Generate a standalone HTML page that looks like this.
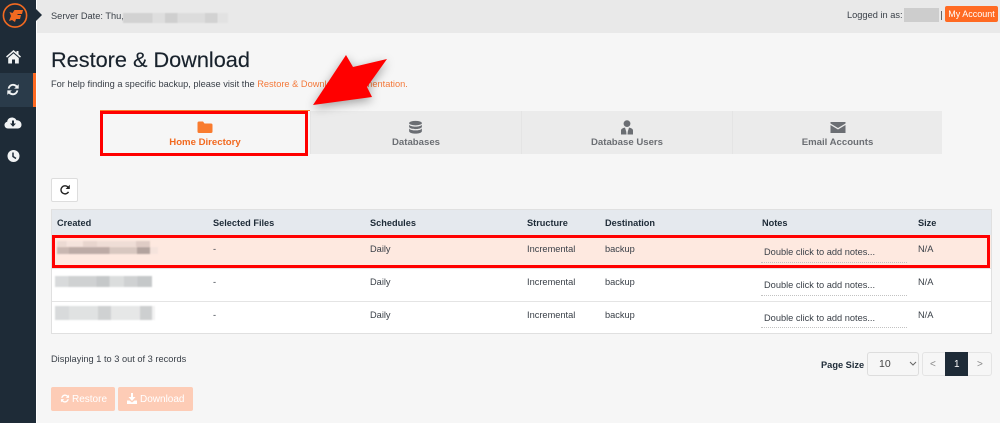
<!DOCTYPE html>
<html><head><meta charset="utf-8"><style>
html,body{margin:0;padding:0}
body{width:1000px;height:423px;overflow:hidden;background:#f6f6f6;position:relative;font-family:"Liberation Sans",sans-serif;font-size:9.25px;color:#3a4048}
.a{position:absolute;white-space:nowrap}
.b{position:absolute}
.tab{position:absolute;top:111px;height:43px;background:#ebebeb;border-left:1px solid #e4e4e4;box-sizing:border-box;text-align:center;font-weight:bold;font-size:9.6px;color:#6b6e73}
.tab span{position:absolute;left:0;right:0;top:25.5px}
.tab svg{position:absolute;left:50%;top:9px;margin-left:-8px}
.th{position:absolute;top:218px;font-weight:bold;color:#1e2b37;font-size:9.2px;white-space:nowrap}
.c{position:absolute;white-space:nowrap;font-size:9.25px;color:#3a4048}
.dot{position:absolute;left:761px;width:146px;border-bottom:1px dotted #c2c2c2}
.bl{position:absolute;filter:blur(.7px)}
</style></head><body>

<div class="b" style="left:37px;top:0;width:963px;height:33px;background:#e9e9e9"></div>
<div class="b" style="left:0;top:0;width:36px;height:423px;background:#1e2b37"></div>
<div class="b" style="left:36px;top:0;width:1px;height:423px;background:#fff"></div>
<div class="b" style="left:0;top:73px;width:36px;height:34px;background:#2a3b4a"></div>
<div class="b" style="left:33px;top:73px;width:3px;height:34px;background:#ff6a22"></div>
<svg class="b" style="left:36px;top:9px" width="7" height="12"><path d="M0 0L6 6L0 12Z" fill="#1e2b37"/></svg>

<svg class="b" style="left:2px;top:2px" width="28" height="28" viewBox="0 0 28 28">
<circle cx="13" cy="13.5" r="11.6" fill="none" stroke="#f26a21" stroke-width="1.6"/>
<path d="M7 19L9 14L7.5 10L10.5 11L12.5 8L21 8L20 12L16 12L15 13L19 13L18 17L14 17L13 20L10 18Z" fill="#f26a21"/>
</svg>

<svg class="b" style="left:5px;top:49px" width="17" height="15" viewBox="0 0 17 15">
<path d="M8.5 1L1 7.5L2 8.6L8.5 3L15 8.6L16 7.5L13.5 5.3V2H11.5V3.5Z" fill="#f1f3f4"/><path d="M3.2 9L8.5 4.4L13.8 9V14.5H10V10.5H7V14.5H3.2Z" fill="#f1f3f4"/>
</svg>
<svg class="b" style="left:6px;top:82px" width="14" height="15" viewBox="0 0 16 17">
<path d="M2 7.5C2.5 4 5 2 8 2C10 2 11.5 2.8 12.8 4L14.5 2.3V7.5H9.3L11.2 5.6C10.3 4.7 9.3 4.2 8 4.2C6 4.2 4.5 5.5 4.1 7.5Z" fill="#f1f3f4"/>
<path d="M14 9.5C13.5 13 11 15 8 15C6 15 4.5 14.2 3.2 13L1.5 14.7V9.5H6.7L4.8 11.4C5.7 12.3 6.7 12.8 8 12.8C10 12.8 11.5 11.5 11.9 9.5Z" fill="#f1f3f4"/>
</svg>
<svg class="b" style="left:4px;top:115px" width="18" height="15" viewBox="0 0 18 15">
<path d="M4 13.5C2 13.5 .5 12 .5 10C.5 8.3 1.7 7 3.2 6.7C3.3 4.5 5.2 2.5 8 2.5C10 2.5 11.7 3.6 12.5 5.3C15 5 17.5 7 17.5 9.7C17.5 12 15.8 13.5 13.7 13.5Z" fill="#f1f3f4"/>
<path d="M8 5.5H10V8.5H12L9 11.8L6 8.5H8Z" fill="#1e2b37"/>
</svg>
<svg class="b" style="left:7px;top:149px" width="14" height="14" viewBox="0 0 14 14">
<circle cx="6.5" cy="7" r="6" fill="#f1f3f4"/><path d="M6 3.5V7.5L9 9.5" fill="none" stroke="#1e2b37" stroke-width="1.5"/>
</svg>

<div class="a" style="left:51px;top:11px">Server Date: Thu,</div>
<div class="b" style="left:123px;top:13px;width:105px;height:10px;filter:blur(.5px);background:linear-gradient(90deg,#d2d2d2 0 28%,#dedede 28% 40%,#cfcfcf 40% 52%,#dcdcdc 52% 78%,#d2d2d2 78% 90%,#e2e2e2 90%)"></div>
<div class="a" style="left:847px;top:10px">Logged in as:</div>
<div class="b" style="left:904px;top:8px;width:35px;height:14px;background:#cdcdcd"></div>
<div class="b" style="left:941px;top:11px;width:1px;height:9px;background:#666"></div>
<div class="a" style="left:945px;top:5.5px;width:53px;height:16px;background:#ff6a22;border-radius:2px;color:#fff;text-align:center;line-height:16px;font-size:9px">My Account</div>

<div class="a" style="left:51px;top:46px;font-size:21.7px;color:#18222c;line-height:27px;-webkit-text-stroke:.15px #18222c">Restore &amp; Download</div>
<div class="a" style="left:51px;top:79px">For help finding a specific backup, please visit the <span style="color:#f4793a">Restore &amp; Download documentation.</span></div>

<div class="tab" style="left:100px;width:210px;background:#f6f6f6;color:#f2691f;border:0"><svg width="16" height="14" viewBox="0 0 16 14" style="top:9px"><path d="M.5 3C.5 2 1 1.5 2 1.5H6L7.5 3.5H14C15 3.5 15.5 4 15.5 5V11.5C15.5 12.5 15 13 14 13H2C1 13 .5 12.5 .5 11.5Z" fill="#f97b2e"/></svg><span>Home Directory</span></div>
<div class="b" style="left:100px;top:110px;width:210px;height:1px;background:#f97b2e"></div>
<div class="tab" style="left:310px;width:211px"><svg width="15" height="15" viewBox="0 0 16 15"><g fill="#6b6e73"><ellipse cx="8" cy="2.8" rx="6.8" ry="2.4"/><path d="M1.2 4.4C2 6 5 6.5 8 6.5S14 6 14.8 4.4V7C14 8.6 11 9.2 8 9.2S2 8.6 1.2 7Z"/><path d="M1.2 8.4C2 10 5 10.6 8 10.6S14 10 14.8 8.4V11.6C14 13.4 11 14 8 14S2 13.4 1.2 11.6Z"/></g></svg><span>Databases</span></div>
<div class="tab" style="left:521px;width:211px"><svg width="16" height="15" viewBox="0 0 16 15"><g fill="#6b6e73"><circle cx="8" cy="3.6" r="3.4"/><path d="M2 14.5V10.5C2 9 3.5 8 6 7.6L7.2 11.5L7.5 14.5ZM14 14.5V10.5C14 9 12.5 8 10 7.6L8.8 11.5L8.5 14.5Z"/></g></svg><span>Database Users</span></div>
<div class="tab" style="left:732px;width:210px"><svg width="16" height="13" viewBox="0 0 16 13" style="top:10px"><g fill="#6b6e73"><path d="M.5 1H15.5V2.5L8 7L.5 2.5Z"/><path d="M.5 4L8 8.5L15.5 4V12H.5Z"/></g></svg><span>Email Accounts</span></div>

<svg class="b" style="left:270px;top:30px;filter:drop-shadow(0 3px 5px rgba(0,0,0,.35))" width="140" height="100" viewBox="270 30 140 100"><path d="M313 105L346 55L353 67L387 59L367 87L372 97Z" fill="#f00"/></svg>
<div class="b" style="left:100px;top:111px;width:208px;height:45px;border:3px solid #f00;box-sizing:border-box"></div>

<div class="b" style="left:51px;top:178px;width:27px;height:24px;background:#fff;border:1px solid #ddd;border-radius:2px;box-sizing:border-box"></div>
<svg class="b" style="left:59px;top:184px" width="12" height="12" viewBox="0 0 12 12"><path d="M9.5 7.8A4 4 0 1 1 9 3.2" fill="none" stroke="#222" stroke-width="1.4"/><path d="M10.8 .8V5H6.6Z" fill="#222"/></svg>

<div class="b" style="left:51px;top:209px;width:941px;height:125px;border:1px solid #e0e0e0;box-sizing:border-box;background:#fff"></div>
<div class="b" style="left:52px;top:210px;width:939px;height:25px;background:#e5e9ee"></div>
<div class="th" style="left:57px">Created</div>
<div class="th" style="left:213px">Selected Files</div>
<div class="th" style="left:370px">Schedules</div>
<div class="th" style="left:527px">Structure</div>
<div class="th" style="left:605px">Destination</div>
<div class="th" style="left:762px">Notes</div>
<div class="th" style="left:918px">Size</div>

<div class="b" style="left:52px;top:235px;width:939px;height:33px;background:#fee9e0"></div>
<div class="b" style="left:52px;top:301px;width:939px;height:1px;background:#e4e4e4"></div>
<div class="b" style="left:52px;top:268px;width:939px;height:1px;background:#e4e4e4"></div>

<div class="bl" style="left:57px;top:241px;width:93px;height:6px;background:linear-gradient(90deg,#ecdad3 0 10%,#f5e3dc 10% 28%,#e8d5ce 28% 43%,#efddd6 43% 85%,#dfccc5 85%)"></div>
<div class="bl" style="left:57px;top:247px;width:101px;height:7px;background:linear-gradient(90deg,#c9b7b1 0 12%,#bdaba6 12% 52%,#d8c7c0 52% 79%,#b3a39e 79% 92%,#f5e3dc 92%)"></div>
<div class="bl" style="left:55px;top:276px;width:97px;height:11px;background:linear-gradient(90deg,#d8dadb 0 14%,#cfd1d2 14% 43%,#c5c8c9 43% 56%,#dbdddd 56% 71%,#cfd1d2 71% 85%,#c5c8c9 85%)"></div>
<div class="bl" style="left:55px;top:306px;width:100px;height:14px;background:linear-gradient(90deg,#d8dadb 0 14%,#e0e2e2 14% 43%,#cfd1d2 43% 56%,#e6e7e7 56% 85%,#cdcfd0 85% 97%,#f2f2f2 97%)"></div>

<div class="c" style="left:213px;top:244px">-</div><div class="c" style="left:213px;top:277px">-</div><div class="c" style="left:213px;top:310px">-</div>
<div class="c" style="left:370px;top:244px">Daily</div><div class="c" style="left:370px;top:277px">Daily</div><div class="c" style="left:370px;top:310px">Daily</div>
<div class="c" style="left:527px;top:244px">Incremental</div><div class="c" style="left:527px;top:277px">Incremental</div><div class="c" style="left:527px;top:310px">Incremental</div>
<div class="c" style="left:605px;top:244px">backup</div><div class="c" style="left:605px;top:277px">backup</div><div class="c" style="left:605px;top:310px">backup</div>
<div class="c" style="left:764px;top:247px">Double click to add notes...</div><div class="c" style="left:764px;top:280px">Double click to add notes...</div><div class="c" style="left:764px;top:313px">Double click to add notes...</div>
<div class="dot" style="top:262px"></div><div class="dot" style="top:295px"></div><div class="dot" style="top:327px"></div>
<div class="c" style="left:918px;top:244px">N/A</div><div class="c" style="left:918px;top:277px">N/A</div><div class="c" style="left:918px;top:310px">N/A</div>

<div class="b" style="left:52px;top:235px;width:938px;height:33px;border:3px solid #f00;box-sizing:border-box"></div>

<div class="a" style="left:51px;top:354px">Displaying 1 to 3 out of 3 records</div>

<div class="a" style="left:821px;top:360px;font-weight:bold;color:#1e2b37">Page Size</div>
<div class="b" style="left:867px;top:352px;width:52px;height:24px;background:#f6f6f6;border:1px solid #ddd;border-radius:3px;box-sizing:border-box"></div>
<div class="a" style="left:879px;top:358px;font-size:10.5px;color:#444">10</div>
<svg class="b" style="left:909px;top:361px" width="8" height="5"><path d="M1 1L4 4L7 1" fill="none" stroke="#666" stroke-width="1"/></svg>
<div class="b" style="left:922px;top:352px;width:70px;height:24px;border:1px solid #e4e4e4;border-radius:3px;box-sizing:border-box"></div>
<div class="b" style="left:945px;top:352px;width:23px;height:24px;background:#1e2b37"></div>
<div class="a" style="left:930px;top:359px;color:#888;font-size:10px">&lt;</div>
<div class="a" style="left:954px;top:359px;color:#fff;font-size:10px">1</div>
<div class="a" style="left:977px;top:359px;color:#888;font-size:10px">&gt;</div>

<div class="b" style="left:51px;top:387px;width:64px;height:23.5px;background:#fdccb6;border-radius:2px"></div>
<div class="b" style="left:118px;top:387px;width:75px;height:23.5px;background:#fdccb6;border-radius:2px"></div>
<svg class="b" style="left:60px;top:393px" width="10" height="11" viewBox="0 0 16 17"><path d="M2 7.5C2.5 4 5 2 8 2C10 2 11.5 2.8 12.8 4L14.5 2.3V7.5H9.3L11.2 5.6C10.3 4.7 9.3 4.2 8 4.2C6 4.2 4.5 5.5 4.1 7.5Z" fill="#fff"/><path d="M14 9.5C13.5 13 11 15 8 15C6 15 4.5 14.2 3.2 13L1.5 14.7V9.5H6.7L4.8 11.4C5.7 12.3 6.7 12.8 8 12.8C10 12.8 11.5 11.5 11.9 9.5Z" fill="#fff"/></svg>
<div class="a" style="left:72px;top:394px;color:#fff;font-size:10px">Restore</div>
<svg class="b" style="left:127px;top:393px" width="10" height="11" viewBox="0 0 10 11"><path d="M4 0H6V4H8.5L5 8L1.5 4H4Z" fill="#fff"/><path d="M0 7.5H2.5L5 9.5L7.5 7.5H10V11H0Z" fill="#fff"/></svg>
<div class="a" style="left:140px;top:394px;color:#fff;font-size:10px">Download</div>

</body></html>
